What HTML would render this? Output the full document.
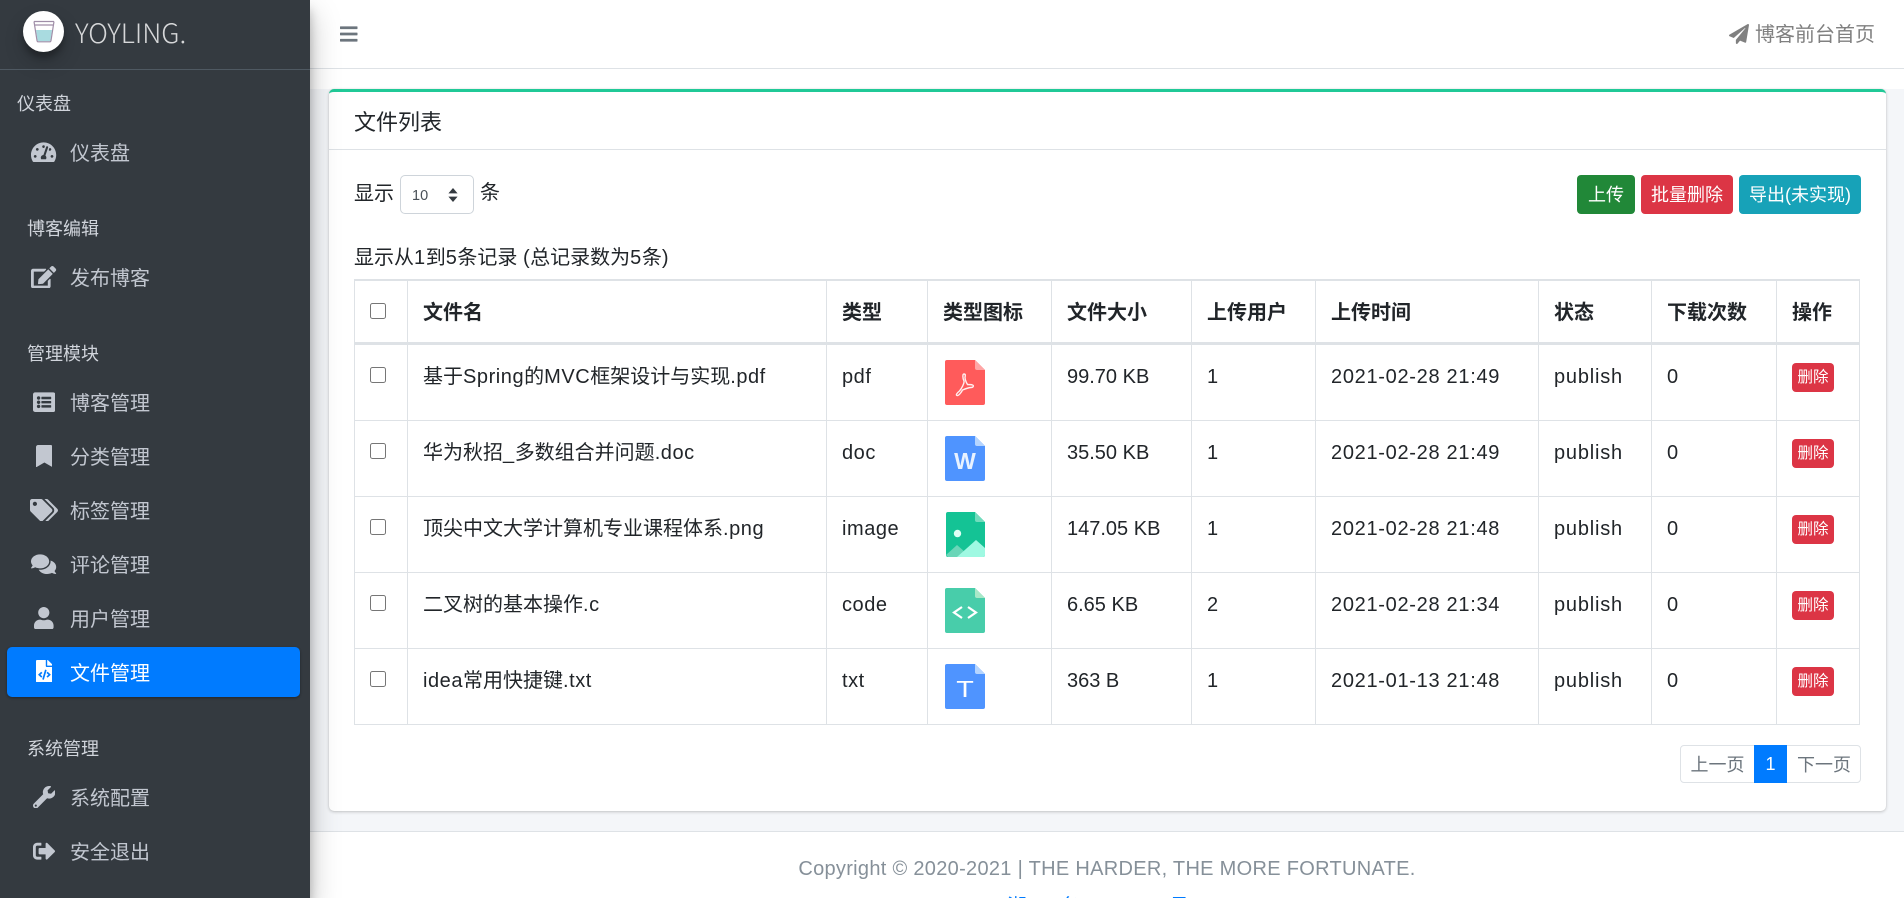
<!DOCTYPE html>
<html lang="zh-CN">
<head>
<meta charset="utf-8">
<title>文件管理</title>
<style>
*{box-sizing:border-box}
html,body{margin:0;padding:0;width:1904px;height:898px;overflow:hidden;background:#fff;font-family:"Liberation Sans","Noto Sans CJK SC",sans-serif;font-size:20px;color:#212529}
#wrap{position:relative;width:1904px;height:898px;overflow:hidden;background:#fff}
.abs{position:absolute}
.t{position:absolute;line-height:30px;height:30px;white-space:nowrap}
.l{letter-spacing:.55px}
.d{letter-spacing:.7px}
.p{letter-spacing:.8px}
#content{left:310px;top:89px;width:1594px;height:742px;background:#f4f6f9;position:absolute}
#top{left:310px;top:0;width:1594px;height:69px;border-bottom:1px solid #dee2e6;background:#fff;position:absolute}
#side{position:absolute;left:0;top:0;width:310px;height:898px;background:#343a40;box-shadow:0 14px 28px rgba(0,0,0,.25),0 10px 10px rgba(0,0,0,.22);z-index:5}
#side .line{position:absolute;left:0;top:69px;width:310px;height:1px;background:#4f5962}
#side .logo{position:absolute;left:23px;top:11px;width:41px;height:41px;border-radius:50%;background:#fff;box-shadow:0 10px 20px rgba(0,0,0,.19),0 6px 6px rgba(0,0,0,.23)}
#side .brand{position:absolute;left:75px;top:17px;line-height:30px;font-family:"Noto Sans CJK SC","Liberation Sans",sans-serif;font-size:27px;font-weight:300;color:rgba(255,255,255,.8);white-space:nowrap}
#side .h{position:absolute;left:27px;font-size:18px;line-height:26px;color:#d0d4db;white-space:nowrap}
#side .n{position:absolute;left:70px;font-size:20px;line-height:30px;color:#c2c7d0;white-space:nowrap}
#side svg.i{position:absolute;height:22.4px;fill:#c2c7d0}
#active{position:absolute;left:7px;top:647px;width:293px;height:50px;border-radius:5px;background:#007bff;box-shadow:0 1px 3px rgba(0,0,0,.12),0 1px 2px rgba(0,0,0,.24)}
#card{position:absolute;left:329px;top:89px;width:1557px;height:722px;background:#fff;border-radius:5px;border-top:3px solid #20c997;box-shadow:0 0 1px rgba(0,0,0,.125),0 1px 3px rgba(0,0,0,.2)}
#chead{position:absolute;left:329px;top:149px;width:1557px;height:1px;background:#dee2e6}
.btn{position:absolute;top:175px;height:39px;border-radius:4px;color:#fff;font-size:18px;line-height:41px;text-align:center;white-space:nowrap}
#sel{position:absolute;left:400px;top:175px;width:74px;height:39px;border:1px solid #ced4da;border-radius:5px;background:#fff}
#sel span{position:absolute;left:11px;top:9px;font-size:14.5px;line-height:22px;color:#495057}
table{position:absolute;left:354px;top:279px;border-collapse:separate;border-spacing:0;table-layout:fixed;width:1506px;border-left:1px solid #dee2e6;border-top:2px solid #dee2e6}
td,th{border-right:1px solid #dee2e6;border-bottom:1px solid #dee2e6;padding:17px 0 0 15px;vertical-align:top;line-height:30px;font-weight:400;text-align:left;height:76px;overflow:hidden;white-space:nowrap}
th{height:64px;border-bottom:3px solid #dee2e6;font-weight:700;padding-top:17px}
td.c,th.c{padding:0;position:relative}
.cb{position:absolute;left:15px;top:22px;width:16px;height:16px;border:1px solid #767676;border-radius:2.5px;background:#fff}
td svg.f{display:block;margin-top:-2px;margin-left:2px}
.del{display:block;width:42px;height:29px;background:#dc3545;border-radius:4px;color:#fff;font-size:15.5px;line-height:30px;text-align:center;margin-top:1px;margin-left:0}
#pg{position:absolute;left:1680px;top:745px;width:181px;height:38px;border:1px solid #dee2e6;border-radius:4px;background:#fff}
#pg div{position:absolute;top:-1px;height:38px;line-height:40px;font-size:18px;color:#6c757d;text-align:center}
#foot{position:absolute;left:310px;top:831px;width:1594px;height:67px;background:#fff;border-top:1px solid #dee2e6;text-align:center;overflow:hidden}
#foot .a{position:absolute;left:0;width:1594px;top:22px;line-height:30px;color:#869099;letter-spacing:.3px;white-space:nowrap}
#foot .b{position:absolute;left:0;width:1594px;top:60px;height:6px;overflow:hidden;line-height:30px;color:#007bff;white-space:nowrap}
</style>
</head>
<body>
<div id="wrap">
<div id="top"></div>
<div id="content"></div>

<svg class="abs" style="left:340px;top:24px" width="17.5" height="20" viewBox="0 0 448 512" fill="#6c757d"><path d="M16 132h416c8.837 0 16-7.163 16-16V76c0-8.837-7.163-16-16-16H16C7.163 60 0 67.163 0 76v40c0 8.837 7.163 16 16 16zm0 160h416c8.837 0 16-7.163 16-16v-40c0-8.837-7.163-16-16-16H16c-8.837 0-16 7.163-16 16v40c0 8.837 7.163 16 16 16zm0 160h416c8.837 0 16-7.163 16-16v-40c0-8.837-7.163-16-16-16H16c-8.837 0-16 7.163-16 16v40c0 8.837 7.163 16 16 16z"/></svg>
<svg class="abs" style="left:1729px;top:24px" width="20" height="20" viewBox="0 0 512 512" fill="#808080"><path d="M476 3.2L12.500 270.600c-18.100 10.400-15.800 35.600 2.200 43.200L121 358.400l287.300-253.200c5.500-4.900 13.300 2.600 8.600 8.300L176 407v80.500c0 23.600 28.500 32.900 42.500 15.800L282 426l124.600 52.200c14.200 6 30.400-2.900 33-18.200l72-432C515 7.800 493.300-6.800 476 3.200z"/></svg>
<div class="t" style="left:1755px;top:20px;color:#808080">博客前台首页</div>

<div id="card"></div>
<div id="chead"></div>
<div class="t" style="left:354px;top:108px;font-size:22px">文件列表</div>

<div class="t" style="left:354px;top:179px">显示</div>
<div id="sel"><span>10</span>
<svg class="abs" style="left:46px;top:12px" width="12" height="14" viewBox="0 0 12 14" fill="#343a40"><path d="M6 0l4.600 5.400H1.400zM6 14l4.600-5.400H1.400z"/></svg></div>
<div class="t" style="left:480px;top:178px">条</div>

<div class="btn" style="left:1577px;width:58px;background:#218838">上传</div>
<div class="btn" style="left:1641px;width:92px;background:#dc3545">批量删除</div>
<div class="btn" style="left:1739px;width:122px;background:#17a2b8">导出(未实现)</div>

<div class="t" style="left:354px;top:243px">显示从<span class="l">1</span>到<span class="l">5</span>条记录 <span class="l">(</span>总记录数为<span class="l">5</span>条<span class="l">)</span></div>

<table>
<colgroup><col style="width:53px"><col style="width:419px"><col style="width:101px"><col style="width:124px"><col style="width:140px"><col style="width:124px"><col style="width:223px"><col style="width:113px"><col style="width:125px"><col style="width:83px"></colgroup>
<tr><th class="c"><span class="cb"></span></th><th>文件名</th><th>类型</th><th>类型图标</th><th>文件大小</th><th>上传用户</th><th>上传时间</th><th>状态</th><th>下载次数</th><th>操作</th></tr>
<tr><td class="c"><span class="cb"></span></td><td>基于<span class="l">Spring</span>的<span class="l">MVC</span>框架设计与实现<span class="l">.pdf</span></td><td><span class="l">pdf</span></td>
<td><svg class="f" width="40" height="45" viewBox="0 0 40 45"><path d="M2 0h28l10 10v33a2 2 0 0 1-2 2H2a2 2 0 0 1-2-2V2a2 2 0 0 1 2-2z" fill="#ff5b5b"/><path d="M30 0l10 10h-8a2 2 0 0 1-2-2z" fill="#ffa6a6"/><path d="M19 14C17.500 14 17.500 18 19 21 19.500 23 17 28 14.500 31 12 33 10.500 35 12 35.500 13.500 36 16 33 17.500 30 20 29 24 27.500 26 27.500 28.500 27.500 29 25.500 27.500 25 26 24.500 23.500 24.500 22.500 24.500 21 22 20 20 20 17.500 20.500 15 20.500 14 19 14Z" fill="none" stroke="#fff" stroke-width="1.400" opacity=".9"/></svg></td>
<td>99.70 KB</td><td>1</td><td class="d">2021-02-28 21:49</td><td class="p">publish</td><td>0</td><td><span class="del">删除</span></td></tr>
<tr><td class="c"><span class="cb"></span></td><td>华为秋招<span class="l">_</span>多数组合并问题<span class="l">.doc</span></td><td><span class="l">doc</span></td>
<td><svg class="f" width="40" height="45" viewBox="0 0 40 45"><path d="M2 0h28l10 10v33a2 2 0 0 1-2 2H2a2 2 0 0 1-2-2V2a2 2 0 0 1 2-2z" fill="#4f94ff"/><path d="M30 0l10 10h-8a2 2 0 0 1-2-2z" fill="#b5d5ff"/><text x="20" y="33" text-anchor="middle" font-size="23" font-weight="700" fill="#e8f2ff" font-family="Liberation Sans">W</text></svg></td>
<td>35.50 KB</td><td>1</td><td class="d">2021-02-28 21:49</td><td class="p">publish</td><td>0</td><td><span class="del">删除</span></td></tr>
<tr><td class="c"><span class="cb"></span></td><td>顶尖中文大学计算机专业课程体系<span class="l">.png</span></td><td><span class="l">image</span></td>
<td><svg class="f" width="40" height="45" viewBox="0 0 40 45"><path d="M3 0h27l10 10v33a2 2 0 0 1-2 2H3a2 2 0 0 1-2-2V2a2 2 0 0 1 2-2z" fill="#14c395"/><path d="M30 0l10 10h-8a2 2 0 0 1-2-2z" fill="#72dcbd"/><circle cx="12.500" cy="21.500" r="3.700" fill="#dffff5"/><path d="M1 43l11-10 8 7-6 5H3z" fill="#6ad6b8"/><path d="M12 45l19-17 9 8v7a2 2 0 0 1-2 2z" fill="#9ff9e2"/></svg></td>
<td>147.05 KB</td><td>1</td><td class="d">2021-02-28 21:48</td><td class="p">publish</td><td>0</td><td><span class="del">删除</span></td></tr>
<tr><td class="c"><span class="cb"></span></td><td>二叉树的基本操作<span class="l">.c</span></td><td><span class="l">code</span></td>
<td><svg class="f" width="40" height="45" viewBox="0 0 40 45"><path d="M2 0h28l10 10v33a2 2 0 0 1-2 2H2a2 2 0 0 1-2-2V2a2 2 0 0 1 2-2z" fill="#48cdaa"/><path d="M30 0l10 10h-8a2 2 0 0 1-2-2z" fill="#a8e8c8"/><path d="M17 19l-8 5.500 8 5.500M23 19l8 5.500-8 5.500" fill="none" stroke="#fff" stroke-width="2.200"/></svg></td>
<td>6.65 KB</td><td>2</td><td class="d">2021-02-28 21:34</td><td class="p">publish</td><td>0</td><td><span class="del">删除</span></td></tr>
<tr><td class="c"><span class="cb"></span></td><td><span class="l">idea</span>常用快捷键<span class="l">.txt</span></td><td><span class="l">txt</span></td>
<td><svg class="f" width="40" height="45" viewBox="0 0 40 45"><path d="M2 0h28l10 10v33a2 2 0 0 1-2 2H2a2 2 0 0 1-2-2V2a2 2 0 0 1 2-2z" fill="#4f94ff"/><path d="M30 0l10 10h-8a2 2 0 0 1-2-2z" fill="#b5d5ff"/><text x="0" y="33" text-anchor="middle" font-size="23" fill="#fff" font-family="Liberation Sans" transform="translate(20 0) scale(1.25 1)">T</text></svg></td>
<td>363 B</td><td>1</td><td class="d">2021-01-13 21:48</td><td class="p">publish</td><td>0</td><td><span class="del">删除</span></td></tr>
</table>

<div id="pg">
<div style="left:0;width:73px">上一页</div>
<div style="left:73px;width:33px;background:#007bff;color:#fff;line-height:38px">1</div>
<div style="left:106px;width:74px">下一页</div>
</div>

<div id="foot">
<div class="a">Copyright © 2020-2021 | THE HARDER, THE MORE FORTUNATE.</div>
<div class="b">湘ICP备18008354号-1</div>
</div>

<div id="side">
<div class="logo">
<svg class="abs" style="left:9px;top:9px" width="24" height="24" viewBox="0 0 24 24"><path d="M4 10h16l-1.500 10a1.500 1.500 0 0 1-1.500 1.300H7a1.500 1.500 0 0 1-1.500-1.300z" fill="#a9dbe0"/><path d="M2 1.500h20M2.500 5h19M2 1.500l3 19a1.500 1.500 0 0 0 1.500 1.300h11a1.500 1.500 0 0 0 1.500-1.300l3-19" fill="none" stroke="#a08ea8" stroke-width="1.200"/></svg>
</div>
<div class="brand">YOYLING.</div>
<div class="line"></div>

<div class="h" style="left:17px;top:91px">仪表盘</div>
<svg class="i" style="left:31.400px;top:141px" viewBox="0 0 576 512"><path d="M288 32C128.940 32 0 160.940 0 320c0 52.800 14.250 102.260 39.060 144.800 5.610 9.620 16.300 15.200 27.440 15.200h443c11.140 0 21.830-5.580 27.440-15.200C561.750 422.260 576 372.800 576 320c0-159.060-128.940-288-288-288zm0 64c14.710 0 26.580 10.130 30.320 23.650-1.110 2.260-2.640 4.230-3.450 6.670l-9.220 27.670c-5.130 3.490-10.970 6.010-17.640 6.010-17.670 0-32-14.330-32-32S270.330 96 288 96zM96 384c-17.670 0-32-14.330-32-32s14.330-32 32-32 32 14.330 32 32-14.330 32-32 32zm48-160c-17.670 0-32-14.330-32-32s14.330-32 32-32 32 14.330 32 32-14.330 32-32 32zm246.770-72.410l-61.330 184C343.130 347.330 352 364.540 352 384c0 11.720-3.380 22.550-8.880 32H232.880c-5.500-9.450-8.880-20.280-8.880-32 0-33.940 26.500-61.430 59.900-63.590l61.340-184.010c4.170-12.560 17.730-19.450 30.360-15.170 12.570 4.190 19.350 17.790 15.170 30.360zm14.660 57.200l15.520-46.550c3.470-1.290 7.130-2.230 11.050-2.230 17.670 0 32 14.330 32 32s-14.330 32-32 32c-11.380-.01-20.890-6.280-26.570-15.220zM480 384c-17.670 0-32-14.330-32-32s14.330-32 32-32 32 14.330 32 32-14.330 32-32 32z"/></svg>
<div class="n" style="top:139px">仪表盘</div>

<div class="h" style="top:216px">博客编辑</div>
<svg class="i" style="left:31.400px;top:266px" viewBox="0 0 576 512"><path d="M402.600 83.200l90.200 90.200c3.800 3.800 3.800 10 0 13.800L274.400 405.600l-92.800 10.300c-12.400 1.400-22.900-9.100-21.500-21.500l10.300-92.800L388.800 83.200c3.800-3.800 10-3.800 13.800 0zm162-22.900l-48.800-48.800c-15.200-15.200-39.900-15.200-55.200 0l-35.400 35.400c-3.800 3.800-3.800 10 0 13.800l90.200 90.200c3.800 3.800 10 3.800 13.800 0l35.400-35.400c15.200-15.300 15.200-40 0-55.200zM384 346.200V448H64V128h229.800c3.200 0 6.200-1.300 8.500-3.500l40-40c7.600-7.600 2.200-20.500-8.500-20.500H48C21.500 64 0 85.500 0 112v352c0 26.500 21.500 48 48 48h352c26.500 0 48-21.500 48-48V306.200c0-10.700-12.900-16-20.500-8.500l-40 40c-2.200 2.300-3.500 5.300-3.500 8.500z"/></svg>
<div class="n" style="top:264px">发布博客</div>

<div class="h" style="top:341px">管理模块</div>
<svg class="i" style="left:32.800px;top:391px" viewBox="0 0 512 512"><path d="M464 480H48c-26.510 0-48-21.490-48-48V80c0-26.510 21.490-48 48-48h416c26.510 0 48 21.490 48 48v352c0 26.510-21.490 48-48 48zM128 120c-22.091 0-40 17.909-40 40s17.909 40 40 40 40-17.909 40-40-17.909-40-40-40zm0 96c-22.091 0-40 17.909-40 40s17.909 40 40 40 40-17.909 40-40-17.909-40-40-40zm0 96c-22.091 0-40 17.909-40 40s17.909 40 40 40 40-17.909 40-40-17.909-40-40-40zm288-136v-32c0-6.627-5.373-12-12-12H204c-6.627 0-12 5.373-12 12v32c0 6.627 5.373 12 12 12h200c6.627 0 12-5.373 12-12zm0 96v-32c0-6.627-5.373-12-12-12H204c-6.627 0-12 5.373-12 12v32c0 6.627 5.373 12 12 12h200c6.627 0 12-5.373 12-12zm0 96v-32c0-6.627-5.373-12-12-12H204c-6.627 0-12 5.373-12 12v32c0 6.627 5.373 12 12 12h200c6.627 0 12-5.373 12-12z"/></svg>
<div class="n" style="top:389px">博客管理</div>
<svg class="i" style="left:35.600px;top:445px" viewBox="0 0 384 512"><path d="M0 512V48C0 21.490 21.490 0 48 0h288c26.510 0 48 21.490 48 48v464L192 400 0 512z"/></svg>
<div class="n" style="top:443px">分类管理</div>
<svg class="i" style="left:30px;top:499px" viewBox="0 0 640 512"><path d="M497.941 225.941L286.059 14.059A48 48 0 0 0 252.118 0H48C21.490 0 0 21.490 0 48v204.118a48 48 0 0 0 14.059 33.941l211.882 211.882c18.744 18.745 49.136 18.746 67.882 0l204.118-204.118c18.745-18.745 18.745-49.137 0-67.882zM112 160c-26.510 0-48-21.490-48-48s21.490-48 48-48 48 21.490 48 48-21.490 48-48 48zm513.941 133.823L421.823 497.941c-18.745 18.745-49.137 18.745-67.882 0l-.36-.36L527.640 323.522c16.999-16.999 26.360-39.600 26.360-63.640s-9.362-46.641-26.360-63.640L331.397 0h48.721a48 48 0 0 1 33.941 14.059l211.882 211.882c18.745 18.745 18.745 49.137 0 67.882z"/></svg>
<div class="n" style="top:497px">标签管理</div>
<svg class="i" style="left:31.400px;top:553px" viewBox="0 0 576 512"><path d="M416 192c0-88.400-93.100-160-208-160S0 103.600 0 192c0 34.300 14.100 65.900 38 92-13.400 30.200-35.500 54.200-35.800 54.500-2.200 2.300-2.800 5.700-1.500 8.700S4.800 352 8 352c36.600 0 66.900-12.300 88.700-25 32.200 15.700 70.300 25 111.300 25 114.900 0 208-71.600 208-160zm122 220c23.900-26 38-57.700 38-92 0-66.900-53.500-124.200-129.300-148.100.9 6.600 1.300 13.300 1.300 20.100 0 105.900-107.700 192-240 192-10.800 0-21.300-.8-31.700-1.900C207.800 439.600 281.800 480 368 480c41 0 79.100-9.200 111.300-25 21.800 12.700 52.100 25 88.700 25 3.200 0 6.100-1.900 7.300-4.800 1.300-2.900.7-6.300-1.500-8.700-.3-.3-22.400-24.200-35.800-54.500z"/></svg>
<div class="n" style="top:551px">评论管理</div>
<svg class="i" style="left:34.200px;top:607px" viewBox="0 0 448 512"><path d="M224 256c70.700 0 128-57.300 128-128S294.700 0 224 0 96 57.300 96 128s57.300 128 128 128zm89.600 32h-16.700c-22.200 10.200-46.900 16-72.900 16s-50.600-5.800-72.900-16h-16.700C60.200 288 0 348.200 0 422.400V464c0 26.500 21.500 48 48 48h352c26.500 0 48-21.500 48-48v-41.600c0-74.200-60.200-134.400-134.400-134.400z"/></svg>
<div class="n" style="top:605px">用户管理</div>

<div id="active"></div>
<svg class="i" style="left:35.600px;top:660px;fill:#fff" viewBox="0 0 384 512"><path d="M384 121.941V128H256V0h6.059c6.365 0 12.470 2.529 16.971 7.029l97.941 97.941A24.002 24.002 0 0 1 384 121.941zM248 160c-13.200 0-24-10.800-24-24V0H24C10.745 0 0 10.745 0 24v464c0 13.255 10.745 24 24 24h336c13.255 0 24-10.745 24-24V160H248zM123.206 400.505a5.400 5.400 0 0 1-7.633.246l-64.866-60.812a5.400 5.400 0 0 1 0-7.879l64.866-60.812a5.400 5.400 0 0 1 7.633.246l19.579 20.885a5.400 5.400 0 0 1-.372 7.747L101.650 336l40.763 35.874a5.400 5.400 0 0 1 .372 7.747l-19.579 20.884zm51.295 50.479l-27.453-7.970a5.402 5.402 0 0 1-3.681-6.692l61.440-211.626a5.402 5.402 0 0 1 6.692-3.681l27.452 7.970a5.400 5.400 0 0 1 3.681 6.692l-61.440 211.626a5.397 5.397 0 0 1-6.691 3.681zm160.792-111.045l-64.866 60.812a5.400 5.400 0 0 1-7.633-.246l-19.580-20.885a5.400 5.400 0 0 1 .372-7.747L284.350 336l-40.763-35.874a5.400 5.400 0 0 1-.372-7.747l19.580-20.885a5.400 5.400 0 0 1 7.633-.246l64.866 60.812a5.400 5.400 0 0 1-.001 7.879z"/></svg>
<div class="n" style="top:659px;color:#fff">文件管理</div>

<div class="h" style="top:736px">系统管理</div>
<svg class="i" style="left:32.800px;top:786px" viewBox="0 0 512 512"><path d="M507.730 109.100c-2.240-9.030-13.540-12.090-20.120-5.510l-74.360 74.360-67.880-11.310-11.310-67.880 74.360-74.360c6.620-6.620 3.430-17.900-5.660-20.160-47.380-11.740-99.550.91-136.580 37.930-39.640 39.640-50.550 97.100-34.050 147.200L18.740 402.760c-24.990 24.990-24.990 65.510 0 90.500 24.990 24.990 65.510 24.990 90.500 0l213.210-213.210c50.120 16.710 107.470 5.680 147.370-34.220 37.070-37.070 49.700-89.320 37.910-136.730zM64 472c-13.250 0-24-10.750-24-24 0-13.260 10.750-24 24-24s24 10.740 24 24c0 13.250-10.750 24-24 24z"/></svg>
<div class="n" style="top:784px">系统配置</div>
<svg class="i" style="left:32.800px;top:840px" viewBox="0 0 512 512"><path d="M497 273L329 441c-15 15-41 4.500-41-17v-96H152c-13.300 0-24-10.700-24-24v-96c0-13.300 10.700-24 24-24h136V88c0-21.400 25.900-32 41-17l168 168c9.300 9.400 9.300 24.600 0 34zM192 436v-40c0-6.600-5.400-12-12-12H96c-17.700 0-32-14.300-32-32V160c0-17.700 14.300-32 32-32h84c6.600 0 12-5.400 12-12V76c0-6.600-5.400-12-12-12H96c-53 0-96 43-96 96v192c0 53 43 96 96 96h84c6.600 0 12-5.400 12-12z"/></svg>
<div class="n" style="top:838px">安全退出</div>
</div>
</div>
</body>
</html>
